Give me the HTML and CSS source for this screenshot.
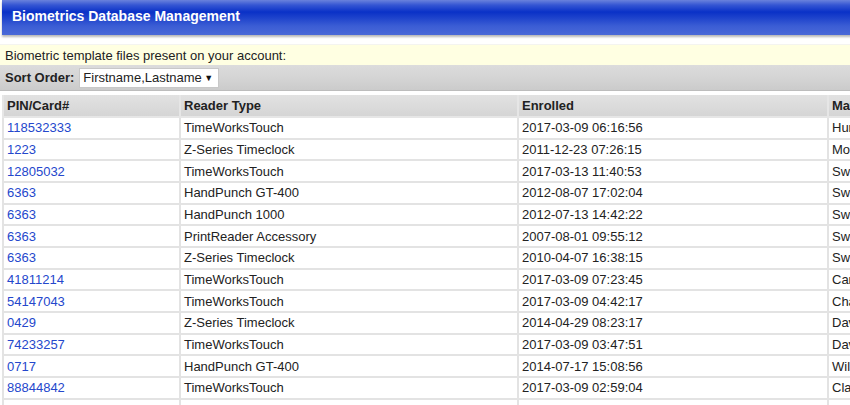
FILE: index.html
```html
<!DOCTYPE html>
<html>
<head>
<meta charset="utf-8">
<title>Biometrics Database Management</title>
<link rel="stylesheet" href="styles.css">
</head>
<body>
<div class="page">
  <div class="titlebar">Biometrics Database Management</div>
  <div class="notice">Biometric template files present on your account:</div>
  <div class="sortbar">
    <span class="sortlabel">Sort Order:</span>
    <span class="selectbox">
      <select class="sortselect">
        <option>Firstname,Lastname</option>
        <option>Lastname,Firstname</option>
        <option>Enrolled</option>
      </select>
      <span class="arrow">&#9660;</span>
    </span>
  </div>
  <table class="grid">
    <colgroup>
      <col class="c1"><col class="c2"><col class="c3"><col class="c4">
    </colgroup>
    <thead>
      <tr><th>PIN/Card#</th><th>Reader Type</th><th>Enrolled</th><th>Matched Employee</th></tr>
    </thead>
    <tbody>
      <tr><td><a href="#">118532333</a></td><td>TimeWorksTouch</td><td>2017-03-09 06:16:56</td><td>Hunter, Alan</td></tr>
      <tr><td><a href="#">1223</a></td><td>Z-Series Timeclock</td><td>2011-12-23 07:26:15</td><td>Morgan, Lisa</td></tr>
      <tr><td><a href="#">12805032</a></td><td>TimeWorksTouch</td><td>2017-03-13 11:40:53</td><td>Swanson, Mark</td></tr>
      <tr><td><a href="#">6363</a></td><td>HandPunch GT-400</td><td>2012-08-07 17:02:04</td><td>Swanson, Mark</td></tr>
      <tr><td><a href="#">6363</a></td><td>HandPunch 1000</td><td>2012-07-13 14:42:22</td><td>Swanson, Mark</td></tr>
      <tr><td><a href="#">6363</a></td><td>PrintReader Accessory</td><td>2007-08-01 09:55:12</td><td>Swanson, Mark</td></tr>
      <tr><td><a href="#">6363</a></td><td>Z-Series Timeclock</td><td>2010-04-07 16:38:15</td><td>Swanson, Mark</td></tr>
      <tr><td><a href="#">41811214</a></td><td>TimeWorksTouch</td><td>2017-03-09 07:23:45</td><td>Carter, James</td></tr>
      <tr><td><a href="#">54147043</a></td><td>TimeWorksTouch</td><td>2017-03-09 04:42:17</td><td>Chase, Robin</td></tr>
      <tr><td><a href="#">0429</a></td><td>Z-Series Timeclock</td><td>2014-04-29 08:23:17</td><td>Davis, Karen</td></tr>
      <tr><td><a href="#">74233257</a></td><td>TimeWorksTouch</td><td>2017-03-09 03:47:51</td><td>Davis, Karen</td></tr>
      <tr><td><a href="#">0717</a></td><td>HandPunch GT-400</td><td>2014-07-17 15:08:56</td><td>Wilson, Tom</td></tr>
      <tr><td><a href="#">88844842</a></td><td>TimeWorksTouch</td><td>2017-03-09 02:59:04</td><td>Clark, Susan</td></tr>
      <tr><td><a href="#">54150666</a></td><td>TimeWorksTouch</td><td>2017-03-09 03:55:39</td><td>Shaw, Peter</td></tr>
    </tbody>
  </table>
</div>
</body>
</html>
```

FILE: styles.css
```css
html, body {
  margin: 0;
  padding: 0;
  overflow: hidden;
  background: #ffffff;
}

body {
  font-family: "Liberation Sans", Arial, sans-serif;
  font-size: 13px;
  color: #222222;
}

.page {
  width: 1200px;
}

.titlebar {
  margin-left: 2px;
  height: 35px;
  box-sizing: border-box;
  padding: 8px 0 0 10px;
  font-size: 14px;
  font-weight: bold;
  color: #ffffff;
  line-height: 17px;
  background: linear-gradient(to bottom, #6a82dc 0px, #3556d3 5px, #0a31c7 12px, #1e43cc 18px, #3b5dd4 26px, #4a69d8 35px);
  box-shadow: 0 2px 2px rgba(0, 0, 0, 0.28);
}

.notice {
  margin-top: 9px;
  height: 21px;
  line-height: 21px;
  padding-left: 5px;
  background: #ffffe2;
  border-top: 1px solid #f4f4f0;
  box-sizing: border-box;
}

.sortbar {
  height: 26px;
  display: flex;
  align-items: center;
  gap: 5px;
  padding-left: 5px;
  background: linear-gradient(to bottom, #dcdcdc, #d3d3d3 60%, #cbcbcb);
  border-bottom: 1px solid #bdbdbd;
  box-sizing: border-box;
}

.sortlabel {
  font-weight: bold;
}

.selectbox {
  display: inline-flex;
  align-items: center;
  width: 140px;
  height: 20px;
  box-sizing: border-box;
  background: #ffffff;
  border: 1px solid #c8c8c8;
  padding: 0 0 0 3px;
}

.sortselect {
  appearance: none;
  -webkit-appearance: none;
  border: none;
  background: transparent;
  font-family: "Liberation Sans", Arial, sans-serif;
  font-size: 13px;
  color: #222222;
  padding: 0;
  margin: 0;
  width: 121px;
  outline: none;
}

.arrow {
  font-size: 9px;
  color: #111111;
  pointer-events: none;
}

.grid {
  margin: 4px 0 0 2px;
  border-collapse: collapse;
  table-layout: fixed;
  width: 1100px;
}

.c1 { width: 177px; }
.c2 { width: 338px; }
.c3 { width: 310px; }
.c4 { width: 275px; }

.grid th,
.grid td {
  border: 2px solid #e3e3e3;
  padding: 0 3px;
  text-align: left;
  white-space: nowrap;
  overflow: hidden;
}

.grid th {
  height: 22px;
  box-sizing: border-box;
  font-weight: bold;
  background: linear-gradient(to bottom, #e2e2e2, #d5d5d5);
  border-color: #e6e6e6;
  border-top: none;
  line-height: 18px;
  padding-top: 1px;
}

.grid td {
  line-height: 15px;
  padding-top: 2.33px;
  padding-bottom: 2.33px;
  background: #ffffff;
}

.grid a {
  color: #2447cc;
  text-decoration: none;
}
```
